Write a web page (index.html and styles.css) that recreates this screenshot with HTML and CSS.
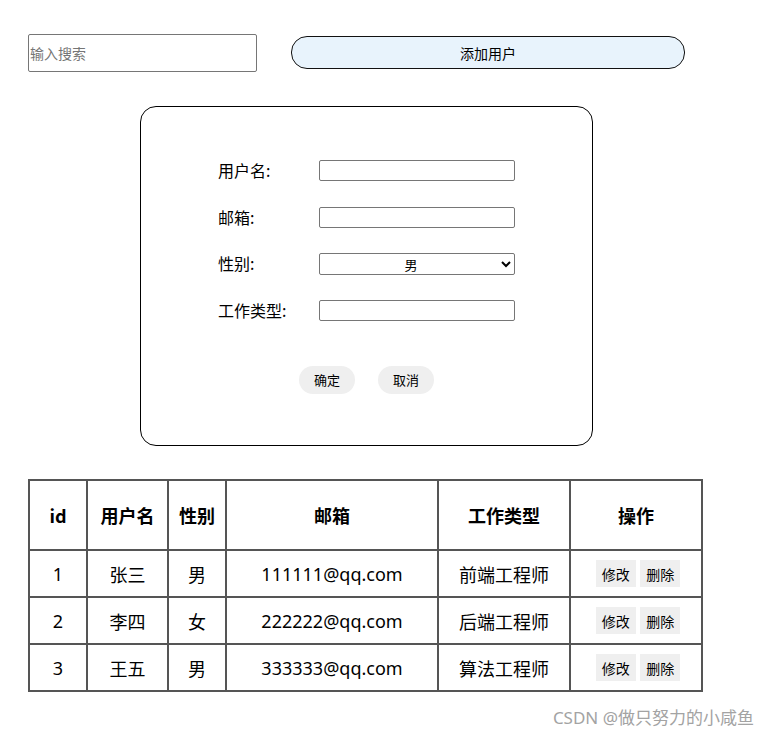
FILE: index.html
```html
<!DOCTYPE html>
<html lang="zh-CN">
<head>
<meta charset="utf-8">
<title>用户管理</title>
<link rel="stylesheet" href="styles.css">
</head>
<body>
<div class="page">
  <div class="topbar">
    <input class="search" type="text" placeholder="输入搜索">
    <button class="add-btn" type="button">添加用户</button>
  </div>

  <div class="dialog">
    <div class="form">
      <div class="row"><label class="lbl">用户名:</label><input class="field" type="text"></div>
      <div class="row"><label class="lbl">邮箱:</label><input class="field" type="text"></div>
      <div class="row"><label class="lbl">性别:</label>
        <select class="field sel"><option>男</option><option>女</option></select>
      </div>
      <div class="row"><label class="lbl">工作类型:</label><input class="field" type="text"></div>
    </div>
    <div class="actions">
      <button class="pill" type="button">确定</button>
      <button class="pill" type="button">取消</button>
    </div>
  </div>

  <table class="users">
    <colgroup>
      <col class="c1"><col class="c2"><col class="c3"><col class="c4"><col class="c5"><col class="c6">
    </colgroup>
    <thead>
      <tr><th>id</th><th>用户名</th><th>性别</th><th>邮箱</th><th>工作类型</th><th>操作</th></tr>
    </thead>
    <tbody>
      <tr><td>1</td><td>张三</td><td>男</td><td>111111@qq.com</td><td>前端工程师</td><td class="ops"><button class="op">修改</button> <button class="op">删除</button></td></tr>
      <tr><td>2</td><td>李四</td><td>女</td><td>222222@qq.com</td><td>后端工程师</td><td class="ops"><button class="op">修改</button> <button class="op">删除</button></td></tr>
      <tr><td>3</td><td>王五</td><td>男</td><td>333333@qq.com</td><td>算法工程师</td><td class="ops"><button class="op">修改</button> <button class="op">删除</button></td></tr>
    </tbody>
  </table>
</div>
<div class="watermark">CSDN @做只努力的小咸鱼</div>
</body>
</html>
```

FILE: styles.css
```css
html, body {
  margin: 0;
  padding: 0;
  background: #fff;
}
body {
  font-family: "Noto Sans", "Noto Sans CJK SC", sans-serif;
  color: #000;
  position: relative;
  min-height: 734px;
}
.page {
  padding: 34px 0 0 28px;
}
.topbar {
  display: flex;
  align-items: flex-start;
  gap: 34px;
}
.search {
  box-sizing: border-box;
  width: 229px;
  height: 38px;
  margin: 0;
  padding: 0 1px;
  border: 1px solid #767676;
  border-radius: 2px;
  font-family: "Noto Sans CJK SC", sans-serif;
  font-size: 14px;
  outline: none;
}
.search::placeholder {
  color: #757575;
}
.add-btn {
  box-sizing: border-box;
  width: 394px;
  height: 33px;
  margin: 2px 0 0 0;
  border: 1px solid #111;
  border-radius: 16px;
  background: #e8f3fc;
  font-family: "Noto Sans CJK SC", sans-serif;
  font-size: 14px;
  color: #000;
}
.dialog {
  box-sizing: border-box;
  width: 453px;
  height: 340px;
  margin: 34px 0 0 112px;
  border: 1px solid #000;
  border-radius: 16px;
  padding: 53px 0 0 77px;
}
.form {
  display: flex;
  flex-direction: column;
  gap: 25.5px;
}
.row {
  display: flex;
  align-items: center;
  height: 21px;
}
.lbl {
  width: 101px;
  font-family: "Noto Sans CJK SC", sans-serif;
  font-size: 16px;
  line-height: 21px;
}
.field {
  box-sizing: border-box;
  width: 196px;
  height: 21px;
  margin: 0;
  padding: 0 2px;
  border: 1px solid #767676;
  border-radius: 2px;
  background: #fff;
  font-family: "Noto Sans CJK SC", sans-serif;
  font-size: 13px;
}
.sel {
  text-align: center;
  text-align-last: center;
  height: 22px;
  color: #000;
}
.actions {
  display: flex;
  justify-content: center;
  gap: 23px;
  margin: 45px 0 0 -77px;
}
.pill {
  width: 56px;
  height: 28px;
  border: none;
  border-radius: 14px;
  background: #efefef;
  font-family: "Noto Sans CJK SC", sans-serif;
  font-size: 13px;
  color: #000;
  padding: 0;
}
.users {
  margin-top: 33px;
  border-collapse: collapse;
  table-layout: fixed;
  width: 673px;
  border: 2px solid #555;
}
.users th, .users td {
  border: 2px solid #555;
  text-align: center;
  padding: 0;
  font-size: 18px;
}
.users th {
  height: 68px;
  font-family: "Noto Sans CJK SC", sans-serif;
  font-weight: bold;
  font-size: 18px;
}
.users td {
  height: 45px;
  font-family: "Noto Sans", "Noto Sans CJK SC", sans-serif;
}
.users td.ops {
  padding-left: 4px;
}
.c1 { width: 58px; }
.c2 { width: 81px; }
.c3 { width: 58px; }
.c4 { width: 212px; }
.c5 { width: 132px; }
.c6 { width: 132px; }
.op {
  height: 27px;
  padding: 0 6px;
  border: none;
  background: #efefef;
  font-family: "Noto Sans CJK SC", sans-serif;
  font-size: 14px;
  color: #000;
  vertical-align: middle;
}
.watermark {
  position: absolute;
  right: 15px;
  top: 704px;
  font-family: "Noto Sans", "Noto Sans CJK SC", sans-serif;
  font-size: 17px;
  color: #a3a3a3;
}
```
